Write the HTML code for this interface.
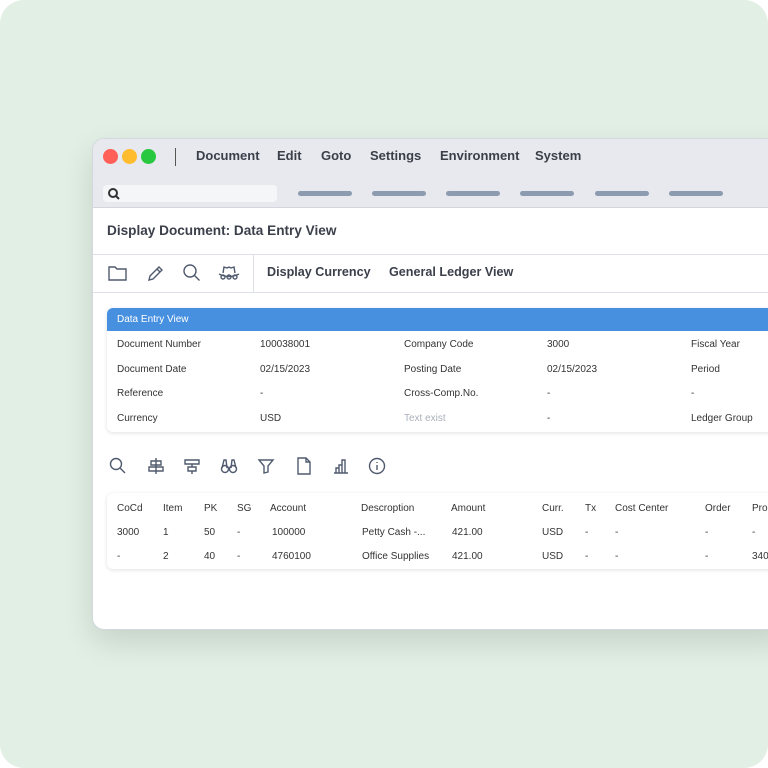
<!DOCTYPE html><html><head><style>
*{margin:0;padding:0;box-sizing:border-box}
body{width:768px;height:768px;background:#fff;font-family:"Liberation Sans",sans-serif;overflow:hidden;position:relative}
.bg{position:absolute;inset:0;background:#e1efe4;border-radius:24px}
.win{position:absolute;left:92px;top:138px;width:700px;height:492px;background:#fff;border-radius:12px;border:1px solid #d4d8de;overflow:hidden;box-shadow:0 12px 30px rgba(0,0,0,.12)}
.tb{position:absolute;left:0;top:0;right:0;height:69px;background:#e8e9ee;border-bottom:1px solid #d3d6dc}
.dot{position:absolute;top:10px;width:15px;height:15px;border-radius:50%}
.menu{position:absolute;top:9px;font-size:13px;color:#3a3f4a;font-weight:bold}
.bar{position:absolute;top:52px;height:5px;width:54px;border-radius:3px;background:#8c9bb0}
.t{position:absolute;font-size:10px;color:#333}
.ic{position:absolute;stroke:#505a6e;fill:none;stroke-width:1.4}
</style></head><body><div class="bg"></div>
<div class="win">
<div class="tb">
<div class="dot" style="left:10px;background:#fe5f57"></div>
<div class="dot" style="left:29px;background:#febc2e"></div>
<div class="dot" style="left:48px;background:#28c840"></div>
<div style="position:absolute;left:82px;top:9px;width:1px;height:18px;background:#555"></div>
<div class="menu" style="left:103px">Document</div>
<div class="menu" style="left:184px">Edit</div>
<div class="menu" style="left:228px">Goto</div>
<div class="menu" style="left:277px">Settings</div>
<div class="menu" style="left:347px">Environment</div>
<div class="menu" style="left:442px">System</div>
<div style="position:absolute;left:10px;top:46px;width:174px;height:17px;background:#f5f6f8;border-radius:4px"></div>
<svg class="ic" style="left:14px;top:48px;stroke:#333;stroke-width:2" width="14" height="14"><circle cx="6" cy="6" r="4"/><path d="M9 9l3 3"/></svg>
<div class="bar" style="left:205px"></div><div class="bar" style="left:279px"></div><div class="bar" style="left:353px"></div><div class="bar" style="left:427px"></div><div class="bar" style="left:502px"></div><div class="bar" style="left:576px"></div>
</div>
<div style="position:absolute;left:14px;top:84px;font-size:13.6px;font-weight:bold;color:#3a3f4a">Display Document: Data Entry View</div>
<div style="position:absolute;left:0;right:0;top:115px;height:39px;border-top:1px solid #dde0e6;border-bottom:1px solid #dde0e6"></div>
<div style="position:absolute;left:160px;top:115px;width:1px;height:39px;background:#dde0e6"></div>
<svg class="ic" style="left:15px;top:124px" width="20" height="20"><path d="M1 4h6l2 2h9v11H1z"/></svg>
<svg class="ic" style="left:53px;top:124px" width="20" height="20"><path d="M3 17l1-4 9-9 3 3-9 9zM11 6l3 3"/></svg>
<svg class="ic" style="left:89px;top:124px" width="20" height="20"><circle cx="8" cy="8" r="6"/><path d="M12.5 12.5l5 5"/></svg>
<svg class="ic" style="left:125px;top:125px" width="22" height="18"><path d="M5 9l1-6 3 1 2-1 2 1 3-1 1 6M1 10q10 5 20 0"/><circle cx="5" cy="13" r="2"/><circle cx="11" cy="13" r="2"/><circle cx="17" cy="13" r="2"/></svg>
<div style="position:absolute;left:174px;top:126px;font-size:12.6px;font-weight:bold;color:#3a3f4a">Display Currency</div>
<div style="position:absolute;left:296px;top:126px;font-size:12.6px;font-weight:bold;color:#3a3f4a">General Ledger View</div>
<div style="position:absolute;left:14px;top:169px;width:700px;height:124px;border-radius:6px;box-shadow:0 1px 4px rgba(0,0,0,.12);overflow:hidden">
<div style="height:23px;background:#4790e0;color:#fff;font-size:10px;padding:6px 10px">Data Entry View</div></div>
<div class="t" style="left:24px;top:200px">Document Number</div><div class="t" style="left:167px;top:200px">100038001</div><div class="t" style="left:311px;top:200px">Company Code</div><div class="t" style="left:454px;top:200px">3000</div><div class="t" style="left:598px;top:200px">Fiscal Year</div>
<div class="t" style="left:24px;top:225px">Document Date</div><div class="t" style="left:167px;top:225px">02/15/2023</div><div class="t" style="left:311px;top:225px">Posting Date</div><div class="t" style="left:454px;top:225px">02/15/2023</div><div class="t" style="left:598px;top:225px">Period</div>
<div class="t" style="left:24px;top:249px">Reference</div><div class="t" style="left:167px;top:249px">-</div><div class="t" style="left:311px;top:249px">Cross-Comp.No.</div><div class="t" style="left:454px;top:249px">-</div><div class="t" style="left:598px;top:249px">-</div>
<div class="t" style="left:24px;top:274px">Currency</div><div class="t" style="left:167px;top:274px">USD</div><div class="t" style="left:311px;top:274px;color:#aab0ba">Text exist</div><div class="t" style="left:454px;top:274px">-</div><div class="t" style="left:598px;top:274px">Ledger Group</div>
<svg class="ic" style="left:16px;top:318px" width="18" height="18"><circle cx="7" cy="7" r="5.5"/><path d="M11 11l5 5"/></svg>
<svg class="ic" style="left:54px;top:318px" width="18" height="18"><path d="M9 1v16M4 4h10v4H4zM2 10h14v4H2z"/></svg>
<svg class="ic" style="left:90px;top:318px" width="18" height="18"><path d="M2 3h14v4H2zM5 10h8v4H5zM9 7v3M9 14v3"/></svg>
<svg class="ic" style="left:127px;top:318px" width="18" height="18"><circle cx="5" cy="12" r="3.5"/><circle cx="13" cy="12" r="3.5"/><path d="M2 11l2-8h2l1 8M16 11l-2-8h-2l-1 8"/></svg>
<svg class="ic" style="left:164px;top:318px" width="18" height="18"><path d="M2 3h14l-5 6v6l-4 1v-7z"/></svg>
<svg class="ic" style="left:202px;top:318px" width="18" height="18"><path d="M3 1h8l4 4v12H3zM11 1v4h4"/></svg>
<svg class="ic" style="left:239px;top:318px" width="18" height="18"><path d="M2 16h14M4 16v-5h3v5M7 16V8h3v8M10 16V3h3v13"/></svg>
<svg class="ic" style="left:275px;top:318px" width="18" height="18"><circle cx="9" cy="9" r="7.5"/><path d="M9 8v5M9 5v1"/></svg>
<div style="position:absolute;left:14px;top:354px;width:700px;height:76px;border-radius:6px;box-shadow:0 1px 4px rgba(0,0,0,.12)"></div>
<div class="t" style="left:24px;top:364px">CoCd</div><div class="t" style="left:70px;top:364px">Item</div><div class="t" style="left:111px;top:364px">PK</div><div class="t" style="left:144px;top:364px">SG</div><div class="t" style="left:177px;top:364px">Account</div><div class="t" style="left:268px;top:364px">Descroption</div><div class="t" style="left:358px;top:364px">Amount</div><div class="t" style="left:449px;top:364px">Curr.</div><div class="t" style="left:492px;top:364px">Tx</div><div class="t" style="left:522px;top:364px">Cost Center</div><div class="t" style="left:612px;top:364px">Order</div><div class="t" style="left:659px;top:364px">Pro</div>
<div class="t" style="left:24px;top:388px">3000</div><div class="t" style="left:70px;top:388px">1</div><div class="t" style="left:111px;top:388px">50</div><div class="t" style="left:144px;top:388px">-</div><div class="t" style="left:179px;top:388px">100000</div><div class="t" style="left:269px;top:388px">Petty Cash -...</div><div class="t" style="left:359px;top:388px">421.00</div><div class="t" style="left:449px;top:388px">USD</div><div class="t" style="left:492px;top:388px">-</div><div class="t" style="left:522px;top:388px">-</div><div class="t" style="left:612px;top:388px">-</div><div class="t" style="left:659px;top:388px">-</div>
<div class="t" style="left:24px;top:412px">-</div><div class="t" style="left:70px;top:412px">2</div><div class="t" style="left:111px;top:412px">40</div><div class="t" style="left:144px;top:412px">-</div><div class="t" style="left:179px;top:412px">4760100</div><div class="t" style="left:269px;top:412px">Office Supplies</div><div class="t" style="left:359px;top:412px">421.00</div><div class="t" style="left:449px;top:412px">USD</div><div class="t" style="left:492px;top:412px">-</div><div class="t" style="left:522px;top:412px">-</div><div class="t" style="left:612px;top:412px">-</div><div class="t" style="left:659px;top:412px">340</div>
</div>
</body></html>
